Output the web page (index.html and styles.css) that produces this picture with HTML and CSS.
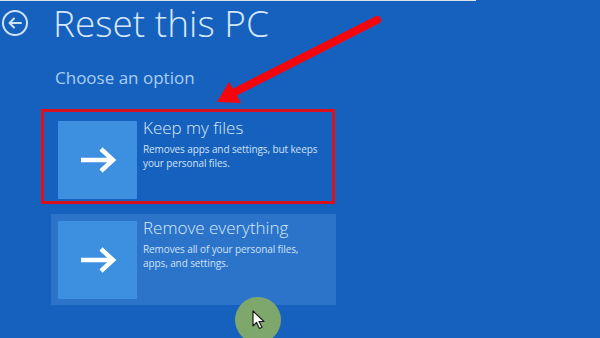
FILE: index.html
```html
<!DOCTYPE html>
<html lang="en">
<head>
<meta charset="utf-8">
<title>Reset this PC</title>
<link rel="stylesheet" href="styles.css">
</head>
<body>
<div class="screen">
  <div class="topline"></div>
  <header class="head">
    <svg class="back" width="28" height="28" viewBox="0 0 28 28" aria-hidden="true">
      <circle cx="14" cy="14" r="12" fill="none" stroke="#cfe3f8" stroke-width="2"/>
      <path d="M20 14H8.5M13 9.5L8.5 14L13 18.5" fill="none" stroke="#cfe3f8" stroke-width="2" stroke-linecap="round" stroke-linejoin="round"/>
    </svg>
    <h1 class="title">Reset this PC</h1>
  </header>
  <p class="subtitle">Choose an option</p>
  <div class="options">
    <div class="option option--marked">
      <div class="tile">
        <svg width="40" height="30" viewBox="0 0 40 30" aria-hidden="true">
          <path d="M3 15H35M23 4L35 15L23 26" fill="none" stroke="#ffffff" stroke-width="4.5" stroke-linejoin="miter"/>
        </svg>
      </div>
      <div class="option-text">
        <h2 class="option-title">Keep my files</h2>
        <p class="option-desc">Removes apps and settings, but keeps your personal files.</p>
      </div>
    </div>
    <div class="option option--hover">
      <div class="tile">
        <svg width="40" height="30" viewBox="0 0 40 30" aria-hidden="true">
          <path d="M3 15H35M23 4L35 15L23 26" fill="none" stroke="#ffffff" stroke-width="4.5" stroke-linejoin="miter"/>
        </svg>
      </div>
      <div class="option-text">
        <h2 class="option-title">Remove everything</h2>
        <p class="option-desc">Removes all of your personal files, apps, and settings.</p>
      </div>
    </div>
  </div>
  <svg class="annot" width="600" height="338" viewBox="0 0 600 338" aria-hidden="true">
    <line x1="377" y1="20" x2="233" y2="93" stroke="#f4060c" stroke-width="8" stroke-linecap="round"/>
    <polygon points="217,102 229,82 241,103" fill="#f4060c"/>
  </svg>
  <div class="halo">
    <svg class="pointer" width="14" height="20" viewBox="0 0 14 20" aria-hidden="true">
      <path d="M1 1V16L4.5 12.5L7.5 18.5L10 17.3L7 11.5H12Z" fill="#ffffff" stroke="#1a1a1a" stroke-width="1.2" stroke-linejoin="round"/>
    </svg>
  </div>
</div>
</body>
</html>
```

FILE: styles.css
```css
html, body {
  margin: 0;
  padding: 0;
}

body {
  background: #1661bd;
  font-family: "Open Sans", "Noto Sans", "Liberation Sans", sans-serif;
  color: #d4e6f8;
}

.screen {
  position: relative;
  width: 600px;
  height: 338px;
  overflow: hidden;
  background: #1661bd;
}

.topline {
  width: 476px;
  height: 1px;
  background: #d9e3ee;
}

.head {
  display: flex;
  align-items: center;
  gap: 24px;
  padding-left: 1px;
}

.back {
  flex: none;
  display: block;
}

.title {
  margin: 0;
  font-size: 37px;
  line-height: 44px;
  font-weight: 300;
  color: #d6e8fa;
}

.subtitle {
  margin: 22px 0 0 55px;
  font-size: 17px;
  line-height: 22px;
  font-weight: 400;
  color: #a9cef3;
}

.options {
  display: flex;
  flex-direction: column;
  gap: 9px;
  width: 285px;
  margin: 25px 0 0 51px;
}

.option {
  position: relative;
  display: flex;
  gap: 6px;
  height: 91px;
  box-sizing: border-box;
  padding: 7px;
}

.option--hover {
  background: #2c74c9;
}

.option--marked::after {
  content: "";
  position: absolute;
  left: -10px;
  top: -5px;
  right: 1px;
  bottom: 1px;
  border: 3px solid #d9111f;
}

.tile {
  flex: none;
  width: 79px;
  height: 78px;
  background: #3d90e0;
  display: flex;
  align-items: center;
  justify-content: center;
}

.tile svg {
  display: block;
}

.option-text {
  min-width: 0;
}

.option-title {
  margin: -1px 0 0;
  font-size: 17px;
  line-height: 16px;
  font-weight: 300;
  color: #d8e9f9;
}

.option-desc {
  max-width: 177px;
  margin: 6px 0 0;
  font-size: 10px;
  line-height: 14px;
  letter-spacing: -0.1px;
  color: #cfe2f6;
}

.annot {
  position: absolute;
  left: 0;
  top: 0;
  pointer-events: none;
}

.halo {
  position: absolute;
  left: 235px;
  top: 297px;
  width: 46px;
  height: 46px;
  border-radius: 50%;
  background: #7ea86b;
}

.pointer {
  position: absolute;
  left: 17px;
  top: 13px;
}
```
